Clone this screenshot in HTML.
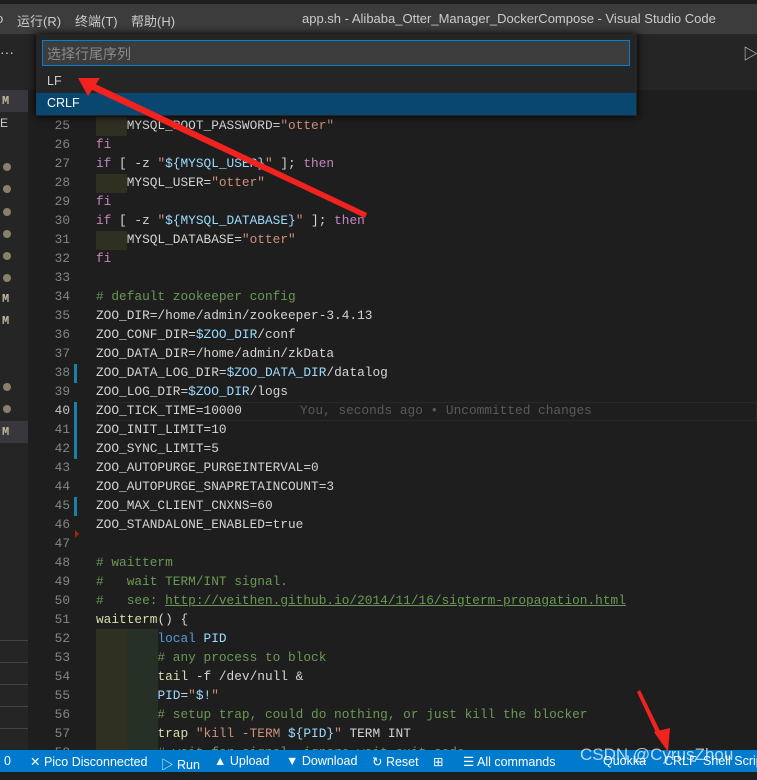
<!DOCTYPE html>
<html><head><meta charset="utf-8"><style>
*{margin:0;padding:0;box-sizing:border-box}
body{width:757px;height:780px;overflow:hidden;background:#1e1e1e;position:relative;font-family:"Liberation Sans","Noto Sans CJK SC",sans-serif}
.abs{position:absolute}
.title{left:0;top:4px;width:757px;height:30px;background:#3c3c3c;color:#ccc;font-size:13px}
.title span{position:absolute;top:7px}
.side{left:0;top:90px;width:28px;height:660px;background:#252526}
.code{font-family:"Liberation Mono",monospace;font-size:12.8px;white-space:pre;line-height:19px;color:#d4d4d4}
.ln{position:absolute;left:28px;width:42px;text-align:right;color:#858585}
.tx{position:absolute;left:96px}
.k{color:#c586c0}.s{color:#ce9178}.v{color:#9cdcfe}.c{color:#6a9955}.b{color:#569cd6}.f{color:#dcdcaa}
.dot{position:absolute;left:3px;width:8px;height:8px;border-radius:50%;background:#8a7f68}
.m{position:absolute;left:2px;color:#c4b89a;font-weight:bold;font-size:12px;font-family:"Liberation Mono",monospace}
.gb{position:absolute;left:74px;width:3px;height:19px;background:#1b81a8}
.sb{left:0;top:750px;width:757px;height:22px;background:#007acc;color:#fff;font-size:12.5px;overflow:hidden}
.sb span{position:absolute;top:4px;white-space:nowrap}
</style></head><body>
<div class="abs" style="left:0;top:0;width:757px;height:4px;background:#1e1e1e"></div>
<div class="abs title"><span style="left:-4px">o</span><span style="left:17px">运行(R)</span><span style="left:75px">终端(T)</span><span style="left:131px">帮助(H)</span><span style="left:302px">app.sh - Alibaba_Otter_Manager_DockerCompose - Visual Studio Code</span></div>
<div class="abs" style="left:0;top:34px;width:757px;height:56px;background:#252526"></div>
<div class="abs" style="left:0;top:44px;color:#ccc;font-size:14px">···</div>
<div class="abs" style="left:743px;top:43px;color:#ccc;font-size:15px">▷</div>
<div class="abs side"></div>
<div class="abs" style="left:0;top:90px;width:28px;height:22px;background:#37373d"></div>
<div class="abs" style="left:0;top:421px;width:28px;height:22px;background:#37373d"></div>
<div class="m" style="top:94px">M</div>
<div class="abs" style="left:0;top:116px;color:#ccc;font-size:12px">E</div>
<div class="dot" style="top:163px"></div><div class="dot" style="top:185px"></div><div class="dot" style="top:208px"></div><div class="dot" style="top:230px"></div><div class="dot" style="top:252px"></div><div class="dot" style="top:274px"></div>
<div class="m" style="top:292px">M</div><div class="m" style="top:314px">M</div>
<div class="dot" style="top:383px"></div><div class="dot" style="top:405px"></div>
<div class="m" style="top:425px">M</div>
<div class="abs" style="left:0;top:640px;width:28px;height:1px;background:#444"></div>
<div class="abs" style="left:0;top:662px;width:28px;height:1px;background:#444"></div>
<div class="abs" style="left:0;top:684px;width:28px;height:1px;background:#444"></div>
<div class="abs" style="left:0;top:706px;width:28px;height:1px;background:#444"></div>
<div class="abs" style="left:0;top:728px;width:28px;height:1px;background:#444"></div>

<div class="abs" style="left:96px;top:117px;width:31px;height:19px;background:#2f2f22"></div>
<div class="abs" style="left:96px;top:174px;width:31px;height:19px;background:#2f2f22"></div>
<div class="abs" style="left:96px;top:231px;width:31px;height:19px;background:#2f2f22"></div>
<div class="abs" style="left:96px;top:629px;width:31px;height:121px;background:#2f2f22"></div>
<div class="abs" style="left:127px;top:629px;width:31px;height:121px;background:#273027"></div>
<div class="abs" style="left:96px;top:402px;width:661px;height:19px;border:1px solid #282828;background:#1e1e1e"></div>
<div class="gb" style="top:364px"></div><div class="gb" style="top:402px"></div><div class="gb" style="top:421px"></div><div class="gb" style="top:440px"></div><div class="gb" style="top:497px"></div>
<div class="abs" style="left:75px;top:530px;width:0;height:0;border-top:4px solid transparent;border-bottom:4px solid transparent;border-left:4px solid #a1260d"></div>

<div class="code">
<div class="ln" style="top:116px">25</div><div class="tx" style="top:116px">    MYSQL_ROOT_PASSWORD=<span class="s">"otter"</span></div>
<div class="ln" style="top:135px">26</div><div class="tx k" style="top:135px">fi</div>
<div class="ln" style="top:154px">27</div><div class="tx" style="top:154px"><span class="k">if</span> [ -z <span class="s">"</span><span class="v">${MYSQL_USER}</span><span class="s">"</span> ]; <span class="k">then</span></div>
<div class="ln" style="top:173px">28</div><div class="tx" style="top:173px">    MYSQL_USER=<span class="s">"otter"</span></div>
<div class="ln" style="top:192px">29</div><div class="tx k" style="top:192px">fi</div>
<div class="ln" style="top:211px">30</div><div class="tx" style="top:211px"><span class="k">if</span> [ -z <span class="s">"</span><span class="v">${MYSQL_DATABASE}</span><span class="s">"</span> ]; <span class="k">then</span></div>
<div class="ln" style="top:230px">31</div><div class="tx" style="top:230px">    MYSQL_DATABASE=<span class="s">"otter"</span></div>
<div class="ln" style="top:249px">32</div><div class="tx k" style="top:249px">fi</div>
<div class="ln" style="top:268px">33</div>
<div class="ln" style="top:287px">34</div><div class="tx c" style="top:287px"># default zookeeper config</div>
<div class="ln" style="top:306px">35</div><div class="tx" style="top:306px">ZOO_DIR=/home/admin/zookeeper-3.4.13</div>
<div class="ln" style="top:325px">36</div><div class="tx" style="top:325px">ZOO_CONF_DIR=<span class="v">$ZOO_DIR</span>/conf</div>
<div class="ln" style="top:344px">37</div><div class="tx" style="top:344px">ZOO_DATA_DIR=/home/admin/zkData</div>
<div class="ln" style="top:363px">38</div><div class="tx" style="top:363px">ZOO_DATA_LOG_DIR=<span class="v">$ZOO_DATA_DIR</span>/datalog</div>
<div class="ln" style="top:382px">39</div><div class="tx" style="top:382px">ZOO_LOG_DIR=<span class="v">$ZOO_DIR</span>/logs</div>
<div class="ln" style="top:401px;color:#c6c6c6">40</div><div class="tx" style="top:401px">ZOO_TICK_TIME=10000</div><div class="tx" style="top:401px;left:300px;color:#5a5a5a">You, seconds ago • Uncommitted changes</div>
<div class="ln" style="top:420px">41</div><div class="tx" style="top:420px">ZOO_INIT_LIMIT=10</div>
<div class="ln" style="top:439px">42</div><div class="tx" style="top:439px">ZOO_SYNC_LIMIT=5</div>
<div class="ln" style="top:458px">43</div><div class="tx" style="top:458px">ZOO_AUTOPURGE_PURGEINTERVAL=0</div>
<div class="ln" style="top:477px">44</div><div class="tx" style="top:477px">ZOO_AUTOPURGE_SNAPRETAINCOUNT=3</div>
<div class="ln" style="top:496px">45</div><div class="tx" style="top:496px">ZOO_MAX_CLIENT_CNXNS=60</div>
<div class="ln" style="top:515px">46</div><div class="tx" style="top:515px">ZOO_STANDALONE_ENABLED=true</div>
<div class="ln" style="top:534px">47</div>
<div class="ln" style="top:553px">48</div><div class="tx c" style="top:553px"># waitterm</div>
<div class="ln" style="top:572px">49</div><div class="tx c" style="top:572px">#   wait TERM/INT signal.</div>
<div class="ln" style="top:591px">50</div><div class="tx c" style="top:591px">#   see: <span style="text-decoration:underline">http://veithen.github.io/2014/11/16/sigterm-propagation.html</span></div>
<div class="ln" style="top:610px">51</div><div class="tx" style="top:610px"><span class="f">waitterm</span>() {</div>
<div class="ln" style="top:629px">52</div><div class="tx" style="top:629px">        <span class="b">local</span> <span class="v">PID</span></div>
<div class="ln" style="top:648px">53</div><div class="tx c" style="top:648px">        # any process to block</div>
<div class="ln" style="top:667px">54</div><div class="tx" style="top:667px">        <span class="f">tail</span> -f /dev/null &amp;</div>
<div class="ln" style="top:686px">55</div><div class="tx" style="top:686px">        <span class="v">PID</span>=<span class="s">"</span><span class="v">$!</span><span class="s">"</span></div>
<div class="ln" style="top:705px">56</div><div class="tx c" style="top:705px">        # setup trap, could do nothing, or just kill the blocker</div>
<div class="ln" style="top:724px">57</div><div class="tx" style="top:724px">        <span class="f">trap</span> <span class="s">"kill -TERM </span><span class="v">${PID}</span><span class="s">"</span> TERM INT</div>
<div class="ln" style="top:743px">58</div><div class="tx c" style="top:743px">        # wait for signal, ignore wait exit code</div>
</div>

<div class="abs" style="left:36px;top:34px;width:601px;height:82px;background:#252526;box-shadow:0 0 8px #000"></div>
<div class="abs" style="left:42px;top:40px;width:588px;height:26px;background:#3c3c3c;border:1px solid #007fd4;color:#8b8b8b;font-size:14px;padding:3px 4px">选择行尾序列</div>
<div class="abs" style="left:47px;top:74px;color:#ccc;font-size:12.5px">LF</div>
<div class="abs" style="left:36px;top:93px;width:600px;height:22px;background:#094771;color:#fff;font-size:12.5px;padding:3px 11px">CRLF</div>

<div class="abs sb"><span style="left:-3px">. 0</span><span style="left:30px">✕ Pico Disconnected</span><span style="left:161px">▷ Run</span><span style="left:214px">▲ Upload</span><span style="left:286px">▼ Download</span><span style="left:372px">↻ Reset</span><span style="left:433px">⊞</span><span style="left:463px">☰ All commands</span><span style="left:603px">Quokka</span><span style="left:664px">CRLF</span><span style="left:703px">Shell Script</span></div>
<div class="abs" style="left:580px;top:745px;color:rgba(255,255,255,.7);font-size:17px;white-space:nowrap">CSDN @CyrusZhou</div>
<div class="abs" style="left:0;top:772px;width:757px;height:8px;background:#1e1e1e"></div>

<svg class="abs" style="left:0;top:0" width="757" height="780">
<polygon points="365,218 88,88 91,82 367,213" fill="#f0231e"/>
<polygon points="78,78 100,78 88,96" fill="#f0231e"/>
<polygon points="640,690 662,735 658,737 637,692" fill="#f0231e"/>
<polygon points="654,732 670,728 668,752" fill="#f0231e"/>
</svg>
</body></html>
